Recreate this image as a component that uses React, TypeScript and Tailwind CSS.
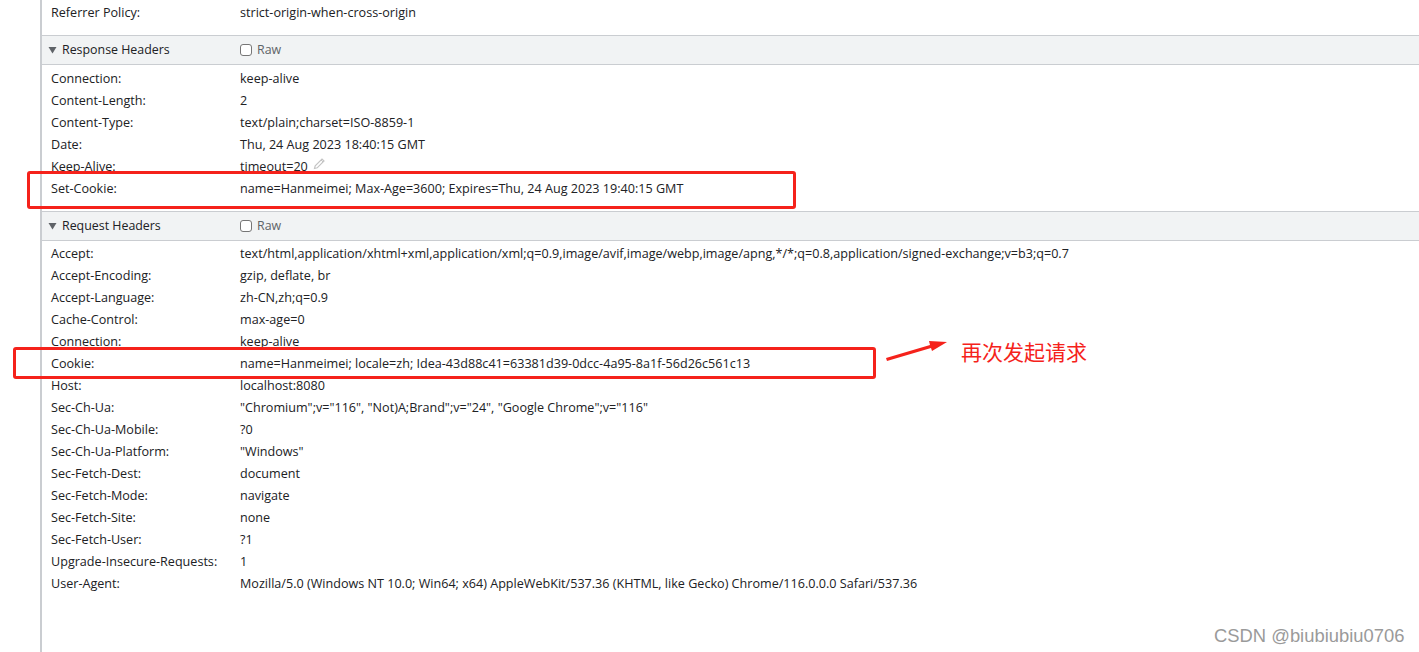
const font = { fontFamily: '"Open Sans", "Noto Sans", sans-serif' };

type Row = [string, string];

const responseRows: Row[] = [
  ['Connection:', 'keep-alive'],
  ['Content-Length:', '2'],
  ['Content-Type:', 'text/plain;charset=ISO-8859-1'],
  ['Date:', 'Thu, 24 Aug 2023 18:40:15 GMT'],
  ['Keep-Alive:', 'timeout=20'],
  ['Set-Cookie:', 'name=Hanmeimei; Max-Age=3600; Expires=Thu, 24 Aug 2023 19:40:15 GMT'],
];

const requestRows: Row[] = [
  ['Accept:', 'text/html,application/xhtml+xml,application/xml;q=0.9,image/avif,image/webp,image/apng,*/*;q=0.8,application/signed-exchange;v=b3;q=0.7'],
  ['Accept-Encoding:', 'gzip, deflate, br'],
  ['Accept-Language:', 'zh-CN,zh;q=0.9'],
  ['Cache-Control:', 'max-age=0'],
  ['Connection:', 'keep-alive'],
  ['Cookie:', 'name=Hanmeimei; locale=zh; Idea-43d88c41=63381d39-0dcc-4a95-8a1f-56d26c561c13'],
  ['Host:', 'localhost:8080'],
  ['Sec-Ch-Ua:', '"Chromium";v="116", "Not)A;Brand";v="24", "Google Chrome";v="116"'],
  ['Sec-Ch-Ua-Mobile:', '?0'],
  ['Sec-Ch-Ua-Platform:', '"Windows"'],
  ['Sec-Fetch-Dest:', 'document'],
  ['Sec-Fetch-Mode:', 'navigate'],
  ['Sec-Fetch-Site:', 'none'],
  ['Sec-Fetch-User:', '?1'],
  ['Upgrade-Insecure-Requests:', '1'],
  ['User-Agent:', 'Mozilla/5.0 (Windows NT 10.0; Win64; x64) AppleWebKit/537.36 (KHTML, like Gecko) Chrome/116.0.0.0 Safari/537.36'],
];

const Pencil = () => (
  <svg width="13" height="13" viewBox="0 0 13 13" className="ml-[5px] mt-[-6px]">
    <path d="M1.5 11.5 L2.2 8.8 L9 2 L11 4 L4.2 10.8 Z" fill="none" stroke="#c4c4c4" strokeWidth="1.2" />
    <path d="M8 3 L10 5" stroke="#c4c4c4" strokeWidth="1" />
  </svg>
);

const HeaderRow = ({ name, value }: { name: string; value: string }) => (
  <div className="flex h-[22px] items-center whitespace-nowrap text-[12.6px] text-[#202124]">
    <div className="w-[198px] shrink-0 pl-[9px]">{name}</div>
    <div className="flex items-center">
      {value}
      {name === 'Keep-Alive:' && <Pencil />}
    </div>
  </div>
);

const SectionTitle = ({ title }: { title: string }) => (
  <div className="flex h-[30px] items-center border-y border-[#cacdd1] bg-[#f1f3f4] text-[12.4px] text-[#202124]">
    <div className="flex w-[198px] shrink-0 items-center pl-[6px]">
      <svg width="9" height="8" viewBox="0 0 9 8" className="mr-[5px]">
        <path d="M0.5 1 L8.5 1 L4.5 7.5 Z" fill="#5f6368" />
      </svg>
      {title}
    </div>
    <div className="flex items-center text-[#5f6368]">
      <span className="mr-[5px] inline-block h-[12px] w-[12px] rounded-[3px] border border-[#767676] bg-white" />
      Raw
    </div>
  </div>
);

export default function App() {
  return (
    <div className="relative h-[652px] w-[1419px] overflow-hidden bg-white" style={font}>
      <div className="flex h-full">
        <div className="w-[40px] shrink-0" />
        <div className="flex-1 border-l-2 border-[#cacdd1]">
          <div className="pt-[2px] pb-[11px]">
            <HeaderRow name="Referrer Policy:" value="strict-origin-when-cross-origin" />
          </div>
          <SectionTitle title="Response Headers" />
          <div className="pt-[3px] pb-[11px]">
            {responseRows.map(([n, v]) => (
              <HeaderRow key={n} name={n} value={v} />
            ))}
          </div>
          <SectionTitle title="Request Headers" />
          <div className="pt-[2px]">
            {requestRows.map(([n, v]) => (
              <HeaderRow key={n + v} name={n} value={v} />
            ))}
          </div>
        </div>
      </div>

      <div className="absolute left-[27px] top-[171px] h-[38px] w-[769px] rounded-[3px] border-[3px] border-[#f5221b]" />
      <div className="absolute left-[13px] top-[347px] h-[32px] w-[863px] rounded-[3px] border-[3px] border-[#f5221b]" />

      <svg className="absolute left-[885px] top-[338px]" width="66" height="26" viewBox="0 0 66 26">
        <path d="M2 23 L46 10 L47 13 L62 4 L44 3 L45 7 L1 20 Z" fill="#f5221b" />
      </svg>

      <div
        className="absolute left-[961px] top-[336px] text-[21px] leading-[30px] text-[#f5221b]"
        style={{ fontFamily: '"Noto Sans CJK SC", sans-serif' }}
      >
        再次发起请求
      </div>

      <div
        className="absolute left-[1214px] top-[623px] text-[18.4px] leading-[26px] text-[#9a9a9a]"
        style={{ fontFamily: '"Liberation Sans", Arial, sans-serif' }}
      >
        CSDN @biubiubiu0706
      </div>
    </div>
  );
}
